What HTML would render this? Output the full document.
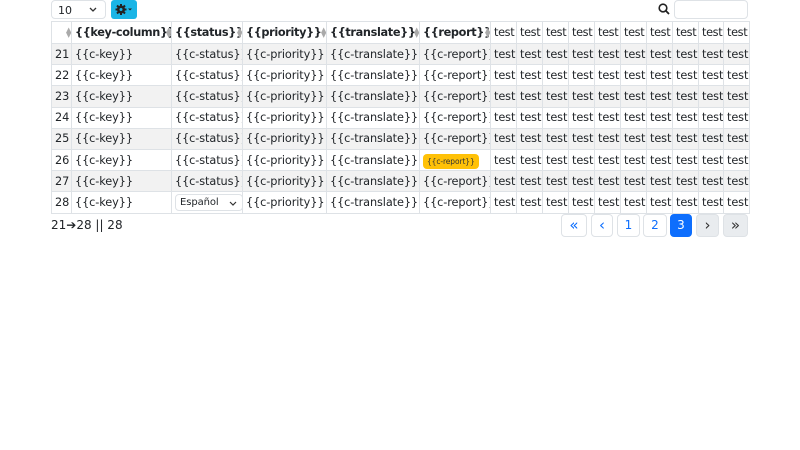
<!DOCTYPE html>
<html><head><meta charset="utf-8"><style>
body{margin:0;width:800px;height:450px;background:#fff;font-family:"DejaVu Sans","Liberation Sans",sans-serif;font-size:12px;color:#212529;position:relative;overflow:hidden}
.sel{position:absolute;left:51px;top:0;height:19px;border:1px solid #dee2e6;border-radius:4px;font-size:11px;line-height:19px;padding-left:6px;box-sizing:border-box;width:55px}
.sel svg{position:absolute;right:8px;top:6px}
.gear{position:absolute;left:111px;top:0;width:26px;height:19px;background:#1ab5e6;border-radius:3px}
.search{position:absolute;left:674px;top:0;width:74px;height:19px;border:1px solid #dee2e6;border-radius:4px;box-sizing:border-box}
table{position:absolute;left:51px;top:21px;border-collapse:collapse;table-layout:fixed;width:698px}
td,th{border:1px solid #dee2e6;height:20px;padding:0 0 0 3px;white-space:nowrap;overflow:hidden;text-align:left;font-size:11.3px;letter-spacing:-0.1px;position:relative}
td{height:20.2px}
th{font-weight:bold;height:21px;letter-spacing:-0.35px}
tr.o td{background:#f2f2f2}
th .s{position:absolute;right:0px;top:6px;font-size:7px;color:#aaa;line-height:5px}
.badge{background:#ffc107;border-radius:4px;font-size:7.5px;padding:3px 4px;color:#333}
.esp{border:1px solid #dee2e6;border-radius:4px;font-size:10px;padding:2px 4px;display:inline-block;width:58px;position:relative;background:#fff}
.info{position:absolute;left:51px;top:218px;font-size:12px}
.pg{position:absolute;top:214px;height:23px;border:1px solid #dee2e6;border-radius:4px;box-sizing:border-box;text-align:center;line-height:21px;color:#0d6efd;font-size:12px}
</style></head><body>
<div class="sel">10<svg width="8" height="6" viewBox="0 0 8 6"><path d="M1 1l3 3 3-3" stroke="#333" fill="none" stroke-width="1.3"/></svg></div>
<div class="gear"><svg width="26" height="19" viewBox="0 0 26 19"><path d="M10 4v11M4.5 9.5h11M6 5.5l8 8M14 5.5l-8 8" stroke="#222" stroke-width="2"/><circle cx="10" cy="9.5" r="4" fill="#222"/><circle cx="10" cy="9.5" r="1.5" fill="#1ab5e6"/><path d="M17 8.5l2 2 2-2z" fill="#222"/></svg></div>
<svg style="position:absolute;left:658px;top:3px" width="12" height="12" viewBox="0 0 12 12"><circle cx="5" cy="5" r="3.8" stroke="#222" stroke-width="1.6" fill="none"/><path d="M7.8 7.8l3.2 3.2" stroke="#222" stroke-width="1.8"/></svg>
<div class="search"></div>
<table>
<colgroup><col style="width:20px"><col style="width:100px"><col style="width:71px"><col style="width:84px"><col style="width:93px"><col style="width:71px"><col style="width:26px"><col style="width:26px"><col style="width:26px"><col style="width:26px"><col style="width:26px"><col style="width:26px"><col style="width:26px"><col style="width:26px"><col style="width:25px"><col style="width:26px"></colgroup>
<tr><th><span class="s">▲<br>▼</span></th><th>{{key-column}}<span class="s">▲<br>▼</span></th><th>{{status}}<span class="s">▲<br>▼</span></th><th>{{priority}}<span class="s">▲<br>▼</span></th><th>{{translate}}<span class="s">▲<br>▼</span></th><th>{{report}}<span class="s">▲<br>▼</span></th>
<th style="font-weight:normal">test</th><th style="font-weight:normal">test</th><th style="font-weight:normal">test</th><th style="font-weight:normal">test</th><th style="font-weight:normal">test</th><th style="font-weight:normal">test</th><th style="font-weight:normal">test</th><th style="font-weight:normal">test</th><th style="font-weight:normal">test</th><th style="font-weight:normal">test</th></tr>
<tr class="o"><td>21</td><td>{{c-key}}</td><td>{{c-status}}</td><td>{{c-priority}}</td><td>{{c-translate}}</td><td>{{c-report}}</td><td>test</td><td>test</td><td>test</td><td>test</td><td>test</td><td>test</td><td>test</td><td>test</td><td>test</td><td>test</td></tr>
<tr><td>22</td><td>{{c-key}}</td><td>{{c-status}}</td><td>{{c-priority}}</td><td>{{c-translate}}</td><td>{{c-report}}</td><td>test</td><td>test</td><td>test</td><td>test</td><td>test</td><td>test</td><td>test</td><td>test</td><td>test</td><td>test</td></tr>
<tr class="o"><td>23</td><td>{{c-key}}</td><td>{{c-status}}</td><td>{{c-priority}}</td><td>{{c-translate}}</td><td>{{c-report}}</td><td>test</td><td>test</td><td>test</td><td>test</td><td>test</td><td>test</td><td>test</td><td>test</td><td>test</td><td>test</td></tr>
<tr><td>24</td><td>{{c-key}}</td><td>{{c-status}}</td><td>{{c-priority}}</td><td>{{c-translate}}</td><td>{{c-report}}</td><td>test</td><td>test</td><td>test</td><td>test</td><td>test</td><td>test</td><td>test</td><td>test</td><td>test</td><td>test</td></tr>
<tr class="o"><td>25</td><td>{{c-key}}</td><td>{{c-status}}</td><td>{{c-priority}}</td><td>{{c-translate}}</td><td>{{c-report}}</td><td>test</td><td>test</td><td>test</td><td>test</td><td>test</td><td>test</td><td>test</td><td>test</td><td>test</td><td>test</td></tr>
<tr><td>26</td><td>{{c-key}}</td><td>{{c-status}}</td><td>{{c-priority}}</td><td>{{c-translate}}</td><td><span class="badge">{{c-report}}</span></td><td>test</td><td>test</td><td>test</td><td>test</td><td>test</td><td>test</td><td>test</td><td>test</td><td>test</td><td>test</td></tr>
<tr class="o"><td>27</td><td>{{c-key}}</td><td>{{c-status}}</td><td>{{c-priority}}</td><td>{{c-translate}}</td><td>{{c-report}}</td><td>test</td><td>test</td><td>test</td><td>test</td><td>test</td><td>test</td><td>test</td><td>test</td><td>test</td><td>test</td></tr>
<tr><td>28</td><td>{{c-key}}</td><td><span class="esp">Español<svg style="position:absolute;right:5px;top:6px" width="8" height="6" viewBox="0 0 8 6"><path d="M1 1l3 3 3-3" stroke="#333" fill="none" stroke-width="1.2"/></svg></span></td><td>{{c-priority}}</td><td>{{c-translate}}</td><td>{{c-report}}</td><td>test</td><td>test</td><td>test</td><td>test</td><td>test</td><td>test</td><td>test</td><td>test</td><td>test</td><td>test</td></tr>
</table>
<div class="info">21➔28 || 28</div>
<div class="pg" style="left:561px;width:26px;font-size:15px">«</div>
<div class="pg" style="left:591px;width:22px;font-size:15px">‹</div>
<div class="pg" style="left:617px;width:23px">1</div>
<div class="pg" style="left:643px;width:24px">2</div>
<div class="pg" style="left:670px;width:22px;background:#0d6efd;border-color:#0d6efd;color:#fff">3</div>
<div class="pg" style="left:696px;width:23px;background:#e9ecef;color:#333;font-size:15px">›</div>
<div class="pg" style="left:723px;width:25px;background:#e9ecef;color:#333;font-size:15px">»</div>
</body></html>
